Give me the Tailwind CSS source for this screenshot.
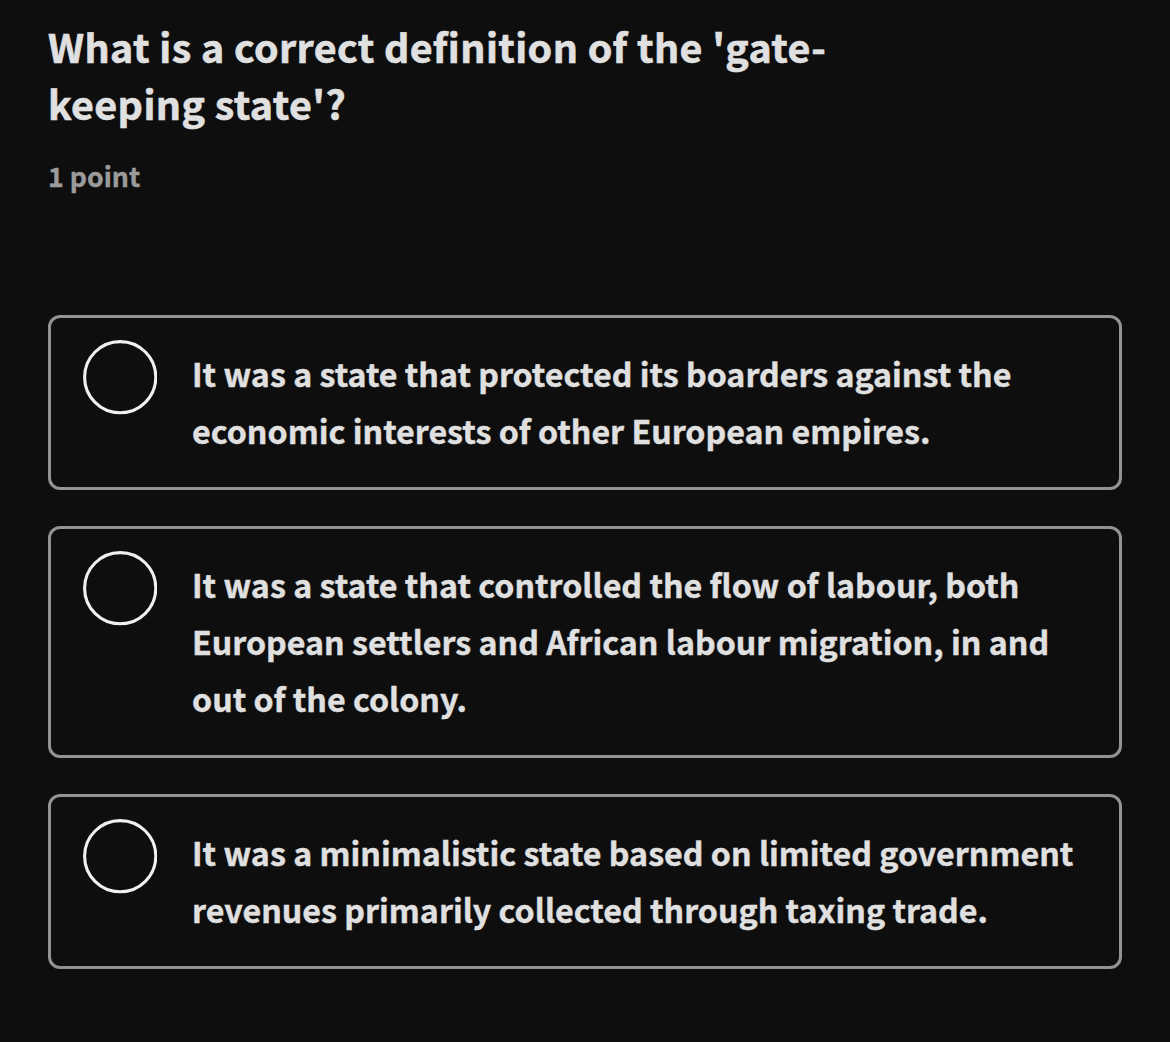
<!DOCTYPE html>
<html lang="en">
<head>
    <meta charset="UTF-8">
    <meta name="viewport" content="width=device-width, initial-scale=1.0">
    <title>Quiz</title>
    <script src="https://cdn.jsdelivr.net/npm/@tailwindcss/browser@4"></script>
</head>
<body class="bg-[#0e0e0e] text-[#e0e0e0] font-['Noto_Sans_CJK_SC',sans-serif] font-bold [-webkit-text-stroke:0.4px] min-h-screen px-12 pt-[17px]">

    <h1 class="text-[39.4px] tracking-[0.4px] leading-[57px] whitespace-nowrap [-webkit-text-stroke:0.6px]">What is a correct definition of the 'gate-<br>keeping state'?</h1>
    <p class="mt-[26px] text-[26.7px] leading-[38px] text-[#9b9b9b]">1 point</p>

    <form class="mt-[120px] flex flex-col gap-9">
        <label class="flex items-start gap-[35px] rounded-xl border-3 border-[#929297] pt-[22px] pl-8 h-[175px]">
            <svg class="w-[74px] h-[75px] shrink-0" viewBox="0 0 74 75" fill="none" stroke="#f0f0ef" stroke-width="3.1"><circle cx="37.2" cy="37.2" r="35.6"/></svg>
            <span class="pt-[5px] text-[32.2px] leading-[57px] whitespace-nowrap">It was a state that protected its boarders against the<br>economic interests of other European empires.</span>
        </label>
        <label class="flex items-start gap-[35px] rounded-xl border-3 border-[#929297] pt-[22px] pl-8 h-[232px]">
            <svg class="w-[74px] h-[75px] shrink-0" viewBox="0 0 74 75" fill="none" stroke="#f0f0ef" stroke-width="3.1"><circle cx="37.2" cy="37.2" r="35.6"/></svg>
            <span class="pt-[5px] text-[32.2px] leading-[57px] whitespace-nowrap">It was a state that controlled the flow of labour, both<br>European settlers and African labour migration, in and<br>out of the colony.</span>
        </label>
        <label class="flex items-start gap-[35px] rounded-xl border-3 border-[#929297] pt-[22px] pl-8 h-[175px]">
            <svg class="w-[74px] h-[75px] shrink-0" viewBox="0 0 74 75" fill="none" stroke="#f0f0ef" stroke-width="3.1"><circle cx="37.2" cy="37.2" r="35.6"/></svg>
            <span class="pt-[5px] text-[32.2px] leading-[57px] whitespace-nowrap">It was a minimalistic state based on limited government<br>revenues primarily collected through taxing trade.</span>
        </label>
    </form>
</body>
</html>
